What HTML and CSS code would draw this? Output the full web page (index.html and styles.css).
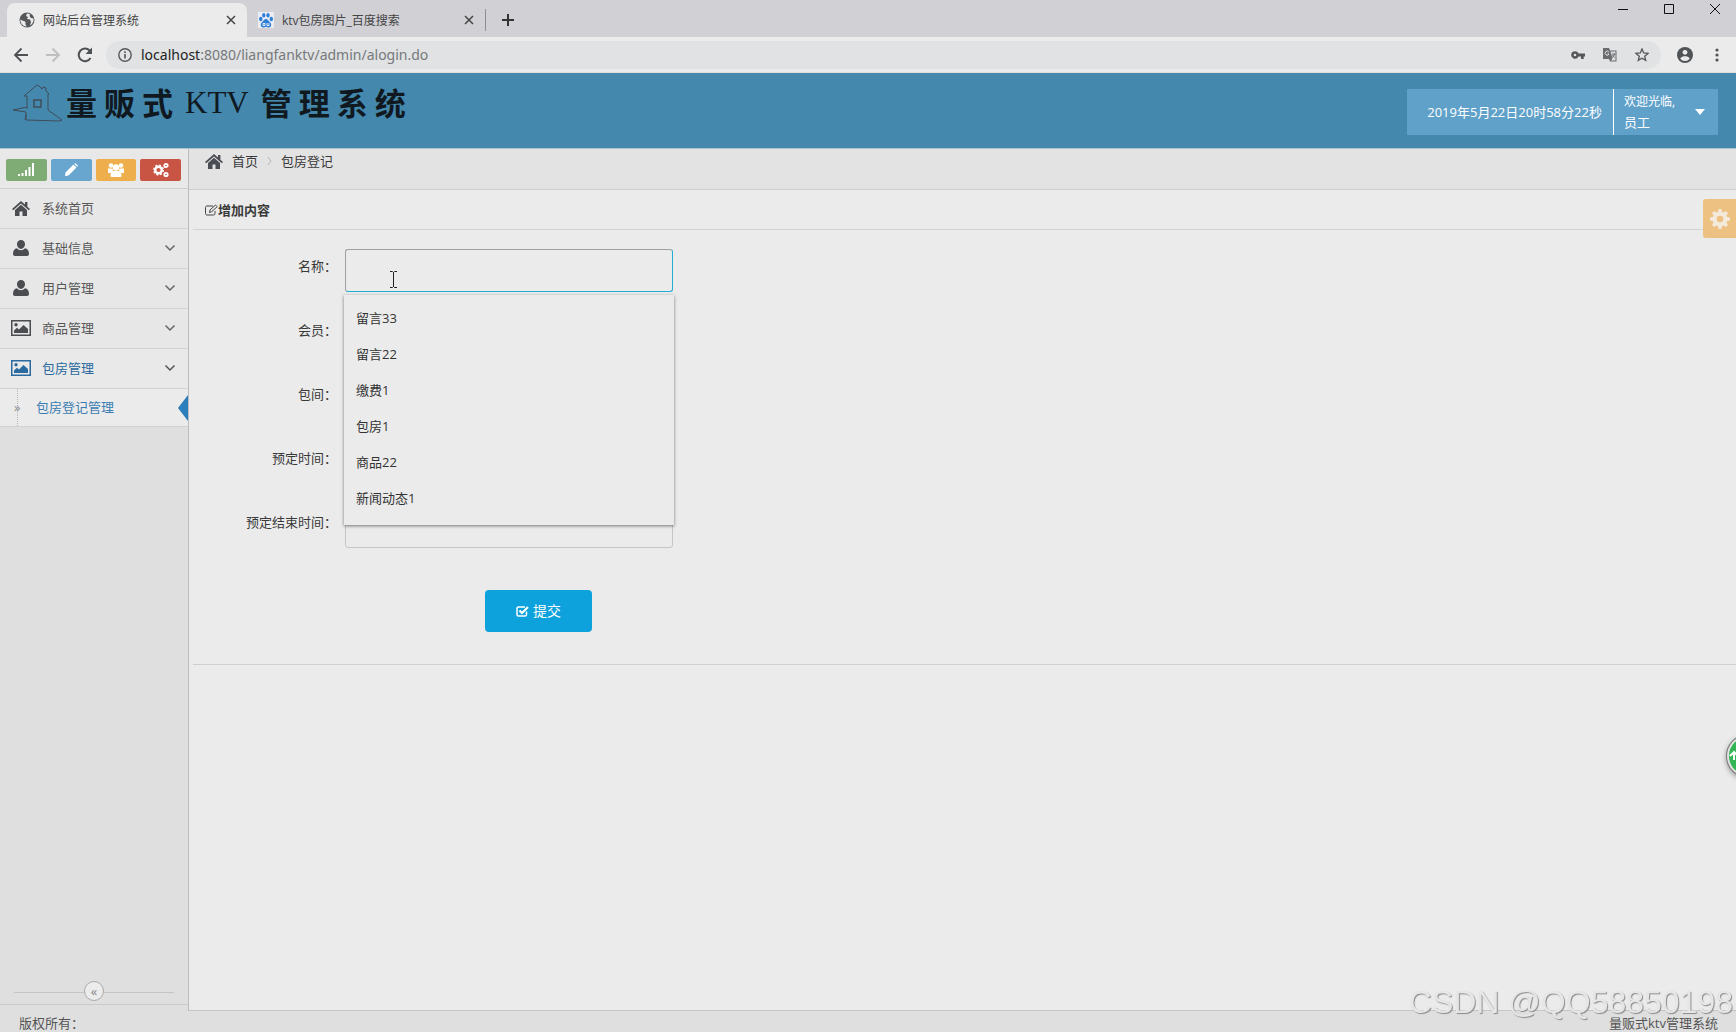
FILE: index.html
```html
<!DOCTYPE html>
<html lang="zh-CN">
<head>
<meta charset="utf-8">
<meta name="viewport" content="width=device-width, initial-scale=1">
<title>网站后台管理系统</title>
<link rel="stylesheet" href="styles.css">
</head>
<body>
<svg class="defs" aria-hidden="true">
  <symbol id="home" viewBox="0 0 18 16"><path d="M9 1 0 9l1.200 1.300L9 3.400l7.800 6.900L18 9l-2.600-2.300V2H13v2.600zM9 4.700 3 10v6h4.500v-4.500h3V16H15v-6z"/></symbol>
  <symbol id="user" viewBox="0 0 16 16"><path d="M8 0a4 4 0 0 1 4 4.300C12 6.500 10 9 8 9S4 6.500 4 4.300A4 4 0 0 1 8 0zM4 8.300C5 9.500 6.500 10.300 8 10.300s3-.800 4-2c2.500.400 4 2.500 4 5.500 0 1.400-.700 2.200-2 2.200H2c-1.300 0-2-.800-2-2.200 0-3 1.500-5.100 4-5.500z"/></symbol>
  <symbol id="picture" viewBox="0 0 20 16"><path fill-rule="evenodd" d="M0 0h20v16H0zM1.500 1.500v13h17v-13z"/><circle cx="5" cy="4.800" r="1.700"/><path d="M3 13v-2.500l3-2.700 2 1.700 4.500-4.500L17 9v4z"/></symbol>
  <symbol id="chevron" viewBox="0 0 12 8"><path d="m1.500 1.500 4.500 4.500 4.500-4.500" fill="none" stroke="currentColor" stroke-width="1.500"/></symbol>
  <symbol id="close" viewBox="0 0 10 10"><path d="m1 1 8 8M9 1 1 9" fill="none" stroke="currentColor" stroke-width="1.500"/></symbol>
  <symbol id="gear" viewBox="0 0 20 20"><path fill-rule="evenodd" d="M8.600 0h2.800l.5 2.700 1.700.7L15.900 2l2 2-1.400 2.400.7 1.700 2.800.5v2.800l-2.800.5-.7 1.700 1.400 2.300-2 2-2.300-1.400-1.700.7-.5 2.800H8.600l-.5-2.800-1.700-.7-2.300 1.400-2-2 1.400-2.300-.7-1.700L0 11.400V8.600l2.800-.5.7-1.700L2.100 4l2-2 2.300 1.400 1.700-.7zM10 6.700a3.300 3.300 0 1 0 0 6.600 3.300 3.300 0 0 0 0-6.600z"/></symbol>
</svg>

<div class="browser">
  <div class="tabstrip">
    <div class="tab tab-active">
      <svg class="i16" viewBox="0 0 16 16"><circle cx="8" cy="8" r="7.500" fill="#55585b"/><path d="M1.500 7.500C3 9 4.500 8.500 6 9.500s-.5 2.500 1 3.500l.5 1.500C3.500 14 1 11 1.500 7.500zM8 1.500 7 4 9 5l-1 2 3 .500 1 2.500-1 3.500c2.500-1.500 4-4 3.500-7L12 6l-1.500-2L11 2z" fill="#ebebeb"/></svg>
      <span class="tab-title">网站后台管理系统</span>
      <button class="bare" aria-label="关闭"><svg class="i10"><use href="#close"/></svg></button>
    </div>
    <div class="tab">
      <svg class="i16 paw" viewBox="0 0 16 16"><rect width="16" height="16" fill="#e9edf4"/><g fill="#2f7fd6"><ellipse cx="2.800" cy="7" rx="1.700" ry="2.200"/><ellipse cx="5.800" cy="3.300" rx="1.600" ry="2.300"/><ellipse cx="10" cy="3.300" rx="1.600" ry="2.300"/><ellipse cx="13.300" cy="7" rx="1.700" ry="2.200"/><path d="M8 7c2 0 2.500 2 4 3.200 2 1.800 1.500 5-1 5.200-1 .100-2-.400-3-.400s-2 .500-3 .400c-2.500-.200-3-3.400-1-5.200C5.500 9 6 7 8 7z"/></g><path d="M5 11.500h2v2H5zM9 11v2.500h2V11" fill="none" stroke="#e9edf4"/></svg>
      <span class="tab-title">ktv包房图片_百度搜索</span>
      <button class="bare" aria-label="关闭"><svg class="i10"><use href="#close"/></svg></button>
    </div>
    <button class="bare newtab" aria-label="新标签页"><svg width="12" height="12" viewBox="0 0 12 12"><path d="M6 0v12M0 6h12" stroke="#333" stroke-width="2"/></svg></button>
    <div class="winctl">
      <button class="bare" aria-label="最小化"><svg class="i10" viewBox="0 0 10 10"><path d="M0 5.500h10" stroke="#111"/></svg></button>
      <button class="bare" aria-label="最大化"><svg class="i10" viewBox="0 0 10 10"><path d="M.5.5h9v9h-9z" fill="none" stroke="#111"/></svg></button>
      <button class="bare" aria-label="关闭窗口"><svg class="i10" viewBox="0 0 10 10"><path d="m0 0 10 10M10 0 0 10" stroke="#111"/></svg></button>
    </div>
  </div>
  <div class="toolbar">
    <button class="bare" aria-label="后退"><svg class="i16" viewBox="0 0 16 16"><path d="M15 8H2m6.500-6.500L2 8l6.500 6.500" fill="none" stroke="#4e5154" stroke-width="1.800"/></svg></button>
    <button class="bare" aria-label="前进"><svg class="i16" viewBox="0 0 16 16"><path d="M1 8h13M7.500 1.500 14 8l-6.500 6.500" fill="none" stroke="#bdbfc0" stroke-width="1.800"/></svg></button>
    <button class="bare" aria-label="刷新"><svg class="i16" viewBox="0 0 16 16"><path d="M13.500 11A6.300 6.300 0 1 1 12.600 3.500L14 5" fill="none" stroke="#4e5154" stroke-width="2"/><path d="M15 .500V7H8.500z" fill="#4e5154"/></svg></button>
    <div class="omnibox">
      <svg class="i14" viewBox="0 0 14 14"><circle cx="7" cy="7" r="6.200" fill="none" stroke="#55585b" stroke-width="1.400"/><path d="M7 6v4.500M7 3.300v1.600" stroke="#55585b" stroke-width="1.600"/></svg>
      <span class="url"><b>localhost</b>:8080/liangfanktv/admin/alogin.do</span>
      <svg class="i14" viewBox="0 0 14 14"><path fill-rule="evenodd" d="M4 3.200c1.600 0 2.900.900 3.500 2.300H14v3h-1.300V11H10V8.500H7.500A3.800 3.800 0 1 1 4 3.200zm0 2.500a1.300 1.300 0 1 0 0 2.600 1.300 1.300 0 0 0 0-2.600z" fill="#55585b"/></svg>
      <svg class="i14" viewBox="0 0 14 14"><path d="M0 0h6l1 2.500h6.500v11H7L6 11H0z" fill="#6a6d70"/><path d="M7.500 3.500h5v9H8l1.500-2z" fill="#dcdedf"/><path d="M5.800 4A2 2 0 1 0 6 6H4.500" fill="none" stroke="#e4e4e4"/><path d="M9 6h3.500M11.500 6c0 1.500-1.500 2.500-2.500 3.500M9.500 7l2 2.500" fill="none" stroke="#66696c"/></svg>
      <svg class="i14" viewBox="0 0 14 14"><path d="m7 1 1.700 4 4.300.400-3.300 2.800 1 4.200L7 10.200l-3.700 2.200 1-4.200L1 5.400 5.300 5z" fill="none" stroke="#55585b" stroke-width="1.300"/></svg>
    </div>
    <svg class="i16 avatar" viewBox="0 0 16 16"><circle cx="8" cy="8" r="8" fill="#505356"/><circle cx="8" cy="5.300" r="2.400" fill="#ebebeb"/><path d="M3.200 11.500C4 9.800 6.500 9.200 8 9.200s4 .600 4.800 2.300A5.700 5.700 0 0 1 8 14a5.700 5.700 0 0 1-4.800-2.500z" fill="#ebebeb"/></svg>
    <button class="bare" aria-label="菜单"><svg width="4" height="14" viewBox="0 0 4 14" fill="#505356"><circle cx="2" cy="2" r="1.600"/><circle cx="2" cy="7" r="1.600"/><circle cx="2" cy="12" r="1.600"/></svg></button>
  </div>
</div>

<header class="navbar">
  <a class="brand" href="#">
    <svg width="52" height="40" viewBox="0 0 52 40" fill="none" stroke="#3f4d59" stroke-width="1"><path d="M15 26V13h-3L25 2l2 1 3 3 1-2 3 1v3l3 3h-1v16l14 10-3 1-33-1v-8L1 27l14-3M14 31l-1 6"/><path d="M22 17h7v7h-7z" stroke-width="1.500"/></svg>
    <span>量</span><span>贩</span><span>式</span><span class="ktv">KTV</span><span>管</span><span>理</span><span>系</span><span>统</span>
  </a>
  <div class="userbar">
    <time class="clock">2019年5月22日20时58分22秒</time>
    <button class="account"><span class="greeting"><small>欢迎光临,</small><br>员工</span><svg width="10" height="6" viewBox="0 0 10 6"><path d="M0 0h10L5 6z" fill="#fff"/></svg></button>
  </div>
</header>

<div class="layout">
  <aside class="sidebar">
    <div class="shortcuts">
      <button class="sc green" aria-label="统计"><svg class="i16" viewBox="0 0 16 16" fill="#fff"><path d="M0 12h2v2H0zM3.500 11h2v3h-2zM7 8h2v6H7zM10.500 5h2v9h-2zM14 1h2v13h-2z"/></svg></button>
      <button class="sc blue" aria-label="编辑"><svg class="i14" viewBox="0 0 14 14" fill="#fff"><path d="m9.500 1.500 3 3-8 8L1 13l.5-3.500zM10.300.700l1-.700L14 2.700l-.8 1z"/></svg></button>
      <button class="sc orange" aria-label="用户"><svg class="i16" viewBox="0 0 16 16" fill="#fff"><circle cx="3" cy="3.500" r="2.300"/><circle cx="13" cy="3.500" r="2.300"/><circle cx="8" cy="5.500" r="3.200"/><path d="M0 6.500h4.500L5 9l-2 2H0zM16 6.500h-4.500L11 9l2 2h3zM5 9h6c2 .5 2.500 3 2.500 5 0 .7-.5 1-1.500 1H4c-1 0-1.500-.3-1.500-1 0-2 .5-4.500 2.500-5z"/></svg></button>
      <button class="sc red" aria-label="设置"><svg class="i16" viewBox="0 0 16 16" fill="none" stroke="#fff"><circle cx="5.500" cy="8" r="3.300" stroke-width="2.400"/><circle cx="5.500" cy="8" r="4.900" stroke-width="1.300" stroke-dasharray="2 1.850"/><circle cx="13" cy="3.500" r="1.700" stroke-width="1.800"/><circle cx="13" cy="12.500" r="1.700" stroke-width="1.800"/></svg></button>
    </div>
    <nav class="menu">
      <a href="#"><svg class="mi"><use href="#home"/></svg><span>系统首页</span></a>
      <a href="#"><svg class="mi"><use href="#user"/></svg><span>基础信息</span><svg class="chev"><use href="#chevron"/></svg></a>
      <a href="#"><svg class="mi"><use href="#user"/></svg><span>用户管理</span><svg class="chev"><use href="#chevron"/></svg></a>
      <a href="#"><svg class="mi"><use href="#picture"/></svg><span>商品管理</span><svg class="chev"><use href="#chevron"/></svg></a>
      <a href="#" class="open"><svg class="mi"><use href="#picture"/></svg><span>包房管理</span><svg class="chev"><use href="#chevron"/></svg></a>
      <a href="#" class="sub"><span class="raquo">»</span><span>包房登记管理</span></a>
    </nav>
    <div class="collapse"><button aria-label="收起">«</button></div>
  </aside>

  <main class="content">
    <nav class="crumbs">
      <svg class="homeicon"><use href="#home"/></svg><a href="#">首页</a><svg width="5" height="8" viewBox="0 0 5 8"><path d="m1 0 3 4-3 4" fill="none" stroke="#b4b6b8"/></svg><span>包房登记</span>
    </nav>
    <h1 class="title"><svg width="13" height="12" viewBox="0 0 13 12" fill="none" stroke="#444"><path d="M10 7v2.500c0 1-.5 1.500-1.500 1.500H2C1 11 .5 10.500.5 9.500v-6C.5 2.500 1 2 2 2h6"/><path d="m4.500 8.500.5-2.500 5.500-5 1.700 1.700-5.500 5z"/></svg>增加内容</h1>
    <form class="form">
      <div class="row"><label for="name">名称：</label>
        <div class="field"><input id="name" class="focused" type="text" autocomplete="off">
          <svg class="ibeam" width="9" height="17" viewBox="0 0 9 17"><path d="M1 .5h2.500l1 1 1-1H8M1 16.500h2.500l1-1 1 1H8M4.500 1v15" fill="none" stroke="#222"/></svg>
          <ul class="suggest"><li>留言33</li><li>留言22</li><li>缴费1</li><li>包房1</li><li>商品22</li><li>新闻动态1</li></ul>
        </div></div>
      <div class="row"><label for="member">会员：</label><div class="field"><select id="member"></select></div></div>
      <div class="row"><label for="room">包间：</label><div class="field"><select id="room"></select></div></div>
      <div class="row"><label for="start">预定时间：</label><div class="field"><input id="start" type="text"></div></div>
      <div class="row"><label for="end">预定结束时间：</label><div class="field"><input id="end" type="text"></div></div>
      <button class="submit" type="submit"><svg width="13" height="12" viewBox="0 0 13 12" fill="none" stroke="#fff"><path d="M10.500 6.500v3c0 1-.5 1.500-1.500 1.500H2.500C1.500 11 1 10.500 1 9.500v-6C1 2.500 1.500 2 2.500 2H9" stroke-width="1.500"/><path d="M3.500 5.500 6 8l6-6" stroke-width="2.200"/></svg>提交</button>
    </form>
    <button class="settings" aria-label="设置"><svg width="20" height="20"><use href="#gear"/></svg></button>
  </main>
</div>

<footer class="footer"><span>版权所有：</span><span>量贩式ktv管理系统</span></footer>
<div class="watermark">CSDN @QQ58850198</div>
<div class="ball"><svg width="12" height="14" viewBox="0 0 12 14"><path d="M1 7 5 3l4 4M5 4v7" fill="none" stroke="#fff" stroke-width="2"/></svg></div>
</body>
</html>
```

FILE: styles.css
```css
* { box-sizing: border-box; }
body {
  margin: 0;
  min-height: 100vh;
  display: flex;
  flex-direction: column;
  background: #dfdfdf;
  color: #393939;
  font: 13px/20px "Open Sans", "Noto Sans CJK SC", sans-serif;
  overflow: hidden;
}
a { color: inherit; text-decoration: none; }
button { font: inherit; color: inherit; cursor: pointer; }
svg { display: block; flex: none; }
svg:not([fill]) { fill: currentColor; }
.defs { position: absolute; width: 0; height: 0; }
.bare { display: flex; padding: 0; border: 0; background: none; }
.i10 { width: 10px; height: 10px; }
.i14 { width: 14px; height: 14px; }
.i16 { width: 16px; height: 16px; }

/* browser frame */
.tabstrip { display: flex; height: 37px; padding: 3px 0 0 7px; background: #d0d0d5; }
.tab {
  display: flex;
  align-items: center;
  gap: 8px;
  width: 238px;
  padding: 0 11px 0 11px;
  border-radius: 8px 8px 0 0;
  font-size: 12px;
  color: #444;
}
.tab-active { width: 240px; padding-left: 12px; background: #ebebeb; }
.tab-title { flex: 1; padding-top: 1px; }
.newtab { align-items: center; align-self: center; height: 22px; padding-left: 16px; border-left: 1px solid #8d8e93; }
.winctl { display: flex; gap: 36px; margin-left: auto; padding: 1px 16px 0 0; height: 11px; }
.toolbar {
  display: flex;
  align-items: center;
  gap: 16px;
  height: 36px;
  padding: 0 17px 0 13px;
  background: #ebebec;
  border-bottom: 1px solid #e5dcdc;
}
.omnibox {
  flex: 1;
  display: flex;
  align-items: center;
  gap: 18px;
  height: 28px;
  margin-left: -3px;
  padding: 0 12px;
  border-radius: 14px;
  background: #e0e2e3;
}
.url { flex: 1; margin-left: -9px; font-family: "Noto Sans", sans-serif; font-size: 14px; color: #77797b; }
.url b { font-weight: 400; color: #222; }
.avatar { margin-right: 6px; }

/* site header */
.navbar {
  display: flex;
  justify-content: space-between;
  height: 75px;
  padding: 10px 18px 0 12px;
  background: #4488ae;
}
.brand { display: flex; align-items: center; gap: 7px; height: 40px; color: #101820; font-size: 31px; font-weight: 700; line-height: 40px; }
.brand svg { margin-right: -5px; }
.ktv { padding: 0 5px; font: 31px/40px "Liberation Serif", serif; }
.userbar { display: flex; height: 46px; margin-top: 6px; background: #60a1ca; color: #fff; }
.clock { padding: 0 11px 0 20px; line-height: 46px; }
.account {
  display: flex;
  align-items: center;
  gap: 20px;
  padding: 0 13px 0 10px;
  border: 0;
  border-left: 1px solid #fff;
  background: none;
  text-align: left;
  color: #fff;
}
.greeting { line-height: 21px; }
.greeting small { font-size: 12px; }

/* sidebar */
.layout { flex: 1; display: flex; border-top: 1px solid #a9c4d1; }
.sidebar { display: flex; flex-direction: column; width: 189px; border-right: 1px solid #bcbcbc; }
.shortcuts { display: flex; gap: 4px; padding: 10px 7px 7px 6px; background: #e8e8e8; border-bottom: 1px solid #cfcfcf; }
.sc {
  flex: 1;
  display: flex;
  align-items: center;
  justify-content: center;
  height: 22px;
  padding: 0;
  border: 0;
  border-radius: 2px;
}
.green { background: #7fac74; }
.blue { background: #68a6d0; }
.orange { background: #efae4c; }
.red { background: #c85443; }
.menu a {
  display: flex;
  align-items: center;
  gap: 11px;
  height: 40px;
  padding: 0 12px 2px 11px;
  border-bottom: 1px solid #d2d2d2;
  background: #e7e7e7;
  color: #585858;
}
.menu span { flex: 1; }
.mi { width: 20px; height: 16px; color: #4b4d50; }
.chev { width: 12px; height: 8px; color: #666; }
.menu .open, .menu .open .mi { color: #2b6a9f; }
.menu .open .chev { color: #555; }
.menu .open { background: #e9e9e9; }
.menu .sub { position: relative; height: 38px; padding-left: 14px; gap: 14px; background: #ebebeb; color: #3b7db2; }
.menu .sub .raquo { flex: none; width: 8px; color: #8c8c8c; }
.sub::before { content: ""; position: absolute; left: 17px; top: 0; height: 100%; border-left: 1px dotted #b5b5b5; }
.sub::after {
  content: "";
  position: absolute;
  right: 0;
  top: 6px;
  border: 13px solid transparent;
  border-left: 0;
  border-right: 10px solid #2b7dbc;
}
.collapse { display: flex; justify-content: center; margin: auto 0 6px; padding: 0 14px 3px; border-bottom: 1px solid #c9c9c9; }
.collapse::before, .collapse::after { content: ""; flex: 1; height: 11px; border-bottom: 1px solid #c4c4c4; }
.collapse button {
  width: 20px;
  height: 20px;
  padding: 0;
  border: 1px solid #aaa;
  border-radius: 50%;
  background: #ececec;
  color: #888;
  line-height: 16px;
}

/* main area */
.content { position: relative; flex: 1; background: #ebebeb; border-bottom: 1px solid #c6c6c6; }
.crumbs { display: flex; align-items: center; gap: 9px; height: 41px; padding: 0 16px 16px; background: #e3e3e3; border-bottom: 1px solid #cdcdcd; }
.homeicon { width: 18px; height: 16px; color: #4b4d55; }
.title {
  display: flex;
  align-items: center;
  height: 40px;
  margin: 0 0 0 4px;
  padding-left: 12px;
  border-bottom: 1px solid #d3d3d3;
  font-size: 13px;
}
.form { margin-left: 4px; padding: 19px 0 32px; border-bottom: 1px solid #cfcfcf; }
.row { display: flex; height: 64px; }
.row label { width: 152px; line-height: 34px; text-align: right; white-space: nowrap; padding-right: 8px; }
.field { position: relative; }
input, select { display: block; width: 328px; height: 43px; padding: 8px 10px; border: 1px solid #c6c6c6; border-radius: 3px; background: #ebebeb; font: inherit; appearance: none; }
.focused { border-color: #a0a0a0 #25acd3 #25acd3 #a0a0a0; outline: none; }
.ibeam { position: absolute; left: 44px; top: 22px; }
.suggest {
  position: absolute;
  z-index: 1;
  top: 46px;
  left: -1px;
  width: 330px;
  margin: 0;
  padding: 5px 0 9px;
  list-style: none;
  background: #ebebeb;
  box-shadow: 0 1px 3px rgba(0, 0, 0, .5);
}
.suggest li { height: 36px; padding-left: 12px; line-height: 36px; color: #333; }
.submit {
  display: flex;
  align-items: center;
  justify-content: center;
  gap: 4px;
  width: 107px;
  height: 42px;
  margin: 21px 0 0 292px;
  border: 0;
  border-radius: 4px;
  background: #0da2dc;
  color: #fff;
  font-size: 14px;
}
.settings {
  position: absolute;
  top: 50px;
  right: 0;
  display: flex;
  align-items: center;
  justify-content: center;
  width: 33px;
  height: 39px;
  padding: 0;
  border: 0;
  border-radius: 3px 0 0 3px;
  background: #edc182;
  color: #f3eadb;
}
.footer { display: flex; justify-content: space-between; height: 21px; padding: 2px 18px 0 19px; color: #555; line-height: 20px; }
.watermark {
  position: fixed;
  right: 3px;
  bottom: 13px;
  font: 32px/34px "Liberation Sans", sans-serif;
  color: #e6e6e6;
  text-shadow: 1px 1px 1px #8a8a8a;
}
.ball {
  position: fixed;
  right: -33px;
  top: 735px;
  display: flex;
  align-items: center;
  width: 42px;
  height: 42px;
  border: 2px solid #e2e2e2;
  border-radius: 50%;
  background: #33b556;
  box-shadow: 0 0 0 1px #777, 0 2px 5px 1px #999;
}
```
